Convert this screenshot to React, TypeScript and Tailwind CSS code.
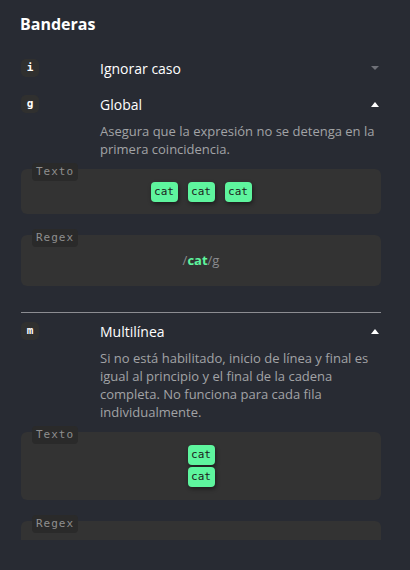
import type { ReactNode } from "react";

type Flag = {
  letter: string;
  title: string;
  open: boolean;
  description?: string;
  stacked?: boolean;
};

const flags: Flag[] = [
  { letter: "i", title: "Ignorar caso", open: false },
  {
    letter: "g",
    title: "Global",
    open: true,
    description: "Asegura que la expresión no se detenga en la primera coincidencia.",
  },
  {
    letter: "m",
    title: "Multilínea",
    open: true,
    stacked: true,
    description:
      "Si no está habilitado, inicio de línea y final es igual al principio y el final de la cadena completa. No funciona para cada fila individualmente.",
  },
];

function Chevron({ up }: { up: boolean }) {
  return (
    <svg width="8" height="5" viewBox="0 0 8 5" className="mr-[2px]">
      {up ? <path d="M0 5 L4 0 L8 5 Z" fill="#ffffff" /> : <path d="M0 0 L8 0 L4 4 Z" fill="#6f7178" />}
    </svg>
  );
}

function Box({ label, children, className }: { label: string; children: ReactNode; className: string }) {
  return (
    <div className="relative pt-[6px]">
      <span className="absolute left-[11px] top-0 rounded-[4px] bg-[#2a2a2a] px-[4px] text-[11px] leading-[18px] tracking-[1px] text-[#8f8f8f] [font-family:'DejaVu_Sans_Mono',monospace]">
        {label}
      </span>
      <div className={`rounded-[6px] bg-[#333333] ${className}`}>{children}</div>
    </div>
  );
}

function Chip() {
  return (
    <span className="flex h-[20px] w-[27px] items-center justify-center rounded-[4px] bg-[#5ef59e] text-[11px] text-[#1c1c1c] shadow-[1px_2px_4px_rgba(0,0,0,0.45)] [font-family:'DejaVu_Sans_Mono',monospace]">
      cat
    </span>
  );
}

export default function App() {
  return (
    <div className="min-h-[570px] bg-[#282b33] [font-family:'Open_Sans',sans-serif]">
      <div className="h-[540px] overflow-hidden pl-[21px] pr-[29px] pt-[13px]">
        <h1 className="-ml-px text-[16px] font-bold leading-[22px] text-white">Banderas</h1>

        <div className="mt-[15px]">
          {flags.map((flag) => (
            <div key={flag.letter}>
              <div className="flex h-[36px] items-center">
                <div className="w-[79px]">
                  <span className="flex h-[18px] w-[18px] items-center justify-center rounded-[5px] bg-[#30302f] text-[11px] font-bold text-white [font-family:'DejaVu_Sans_Mono',monospace]">
                    {flag.letter}
                  </span>
                </div>
                <span className="flex-1 text-[14px] text-white">{flag.title}</span>
                <Chevron up={flag.open} />
              </div>

              {flag.open ? (
                <>
                  <p className="pl-[79px] text-[13px] leading-[18px] text-[#a2a3a6]">{flag.description}</p>

                  <div className="mt-[5px]">
                    <Box
                      label="Texto"
                      className={
                        flag.stacked
                          ? "flex flex-col items-center gap-[2px] py-[13px]"
                          : "flex justify-center gap-[10px] pb-[12px] pt-[13px]"
                      }
                    >
                      <Chip />
                      <Chip />
                      {flag.stacked ? null : <Chip />}
                    </Box>
                  </div>

                  <div className="mt-[15px]">
                    <Box label="Regex" className="py-[16px] text-center text-[13px] leading-[19px]">
                      <span className="text-[#8a8b8f]">/</span>
                      <span className="font-bold text-[#5ef59e]">cat</span>
                      <span className="text-[#8a8b8f]">/g</span>
                    </Box>
                  </div>

                  <div className="mt-[26px] h-px bg-[#8c8d92]" />
                </>
              ) : null}
            </div>
          ))}
        </div>
      </div>
    </div>
  );
}
